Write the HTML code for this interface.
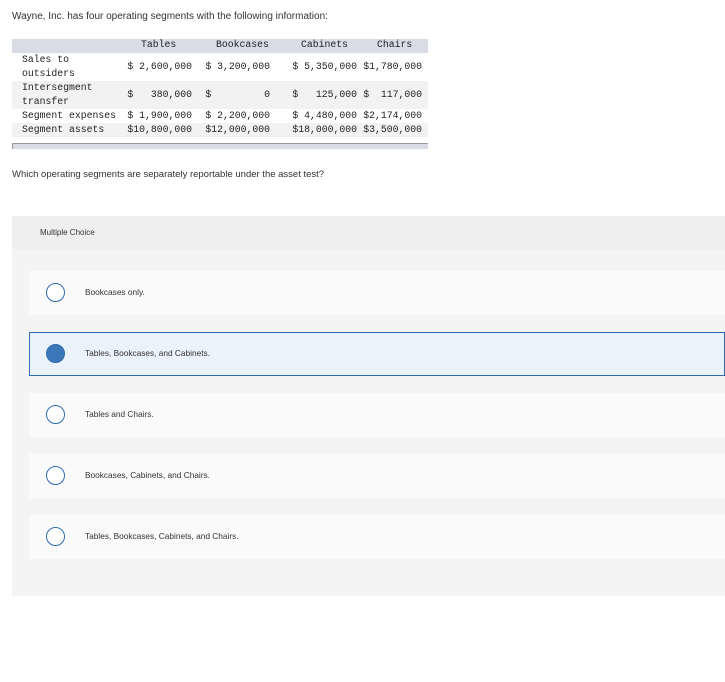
<!DOCTYPE html>
<html><head><style>
body{margin:0;background:#fff;width:725px;height:682px;position:relative;font-family:"Liberation Sans",sans-serif;color:#333;overflow:hidden}
.a{position:absolute;white-space:pre}
.m{font-family:"Liberation Mono",monospace;font-size:9.8px;color:#222}
.col{position:absolute;text-align:right;white-space:pre;font-family:"Liberation Mono",monospace;font-size:9.8px;color:#222;line-height:14px}
.opt{position:absolute;left:29px;width:696px;height:44px;background:#fafafa}
.opt .c{position:absolute;left:17px;top:12px;border:1.5px solid #2f6bb0;border-radius:50%;background:#fff;box-sizing:border-box;width:19px;height:19px}
.opt .t{position:absolute;left:56px;top:16px;font-size:8.3px;color:#333}
</style></head><body>
<div class="a" style="left:12px;top:11px;font-size:10px">Wayne, Inc. has four operating segments with the following information:</div>
<div class="a" style="left:12px;top:39px;width:416px;height:14px;background:#d9dce5"></div>
<div class="a" style="left:12px;top:81px;width:416px;height:28px;background:#f2f2f2"></div>
<div class="a" style="left:12px;top:123px;width:416px;height:14px;background:#f2f2f2"></div>
<div class="a" style="left:12px;top:143px;width:416px;height:6px;background:#d9dce5;border-top:1px solid #999;border-left:1px solid #999;box-sizing:border-box"></div>
<div class="a m" style="left:141px;top:39px">Tables</div>
<div class="a m" style="left:216px;top:39px">Bookcases</div>
<div class="a m" style="left:301px;top:39px">Cabinets</div>
<div class="a m" style="left:377px;top:39px">Chairs</div>
<div class="a m" style="left:22px;top:53px;line-height:14px">Sales to
outsiders</div>
<div class="a m" style="left:22px;top:81px;line-height:14px">Intersegment
transfer</div>
<div class="a m" style="left:22px;top:110px">Segment expenses</div>
<div class="a m" style="left:22px;top:124px">Segment assets</div>
<div class="col" style="left:100px;width:92px;top:60px">$ 2,600,000</div>
<div class="col" style="left:100px;width:92px;top:88px">$   380,000</div>
<div class="col" style="left:100px;width:92px;top:109px">$ 1,900,000
$10,800,000</div>
<div class="col" style="left:180px;width:90px;top:60px">$ 3,200,000</div>
<div class="col" style="left:180px;width:90px;top:88px">$         0</div>
<div class="col" style="left:180px;width:90px;top:109px">$ 2,200,000
$12,000,000</div>
<div class="col" style="left:270px;width:87px;top:60px">$ 5,350,000</div>
<div class="col" style="left:270px;width:87px;top:88px">$   125,000</div>
<div class="col" style="left:270px;width:87px;top:109px">$ 4,480,000
$18,000,000</div>
<div class="col" style="left:350px;width:72px;top:60px">$1,780,000</div>
<div class="col" style="left:350px;width:72px;top:88px">$  117,000</div>
<div class="col" style="left:350px;width:72px;top:109px">$2,174,000
$3,500,000</div>
<div class="a" style="left:12px;top:169px;font-size:9.5px">Which operating segments are separately reportable under the asset test?</div>
<div class="a" style="left:12px;top:216px;width:713px;height:380px;background:#f4f4f4"></div>
<div class="a" style="left:12px;top:216px;width:713px;height:33px;background:#efefef"></div>
<div class="a" style="left:40px;top:228px;font-size:8px">Multiple Choice</div>
<div class="opt" style="top:271px"><div class="c"></div><div class="t">Bookcases only.</div></div>
<div class="opt" style="top:332px;background:#eaf2fb;border:1px solid #2f6bb0;box-sizing:border-box"><div class="c" style="background:#3a76b8;border-color:#2f6bb0;left:16px;top:11px"></div><div class="t" style="left:55px;top:15px">Tables, Bookcases, and Cabinets.</div></div>
<div class="opt" style="top:393px"><div class="c"></div><div class="t">Tables and Chairs.</div></div>
<div class="opt" style="top:454px"><div class="c"></div><div class="t">Bookcases, Cabinets, and Chairs.</div></div>
<div class="opt" style="top:515px"><div class="c"></div><div class="t">Tables, Bookcases, Cabinets, and Chairs.</div></div>
</body></html>
